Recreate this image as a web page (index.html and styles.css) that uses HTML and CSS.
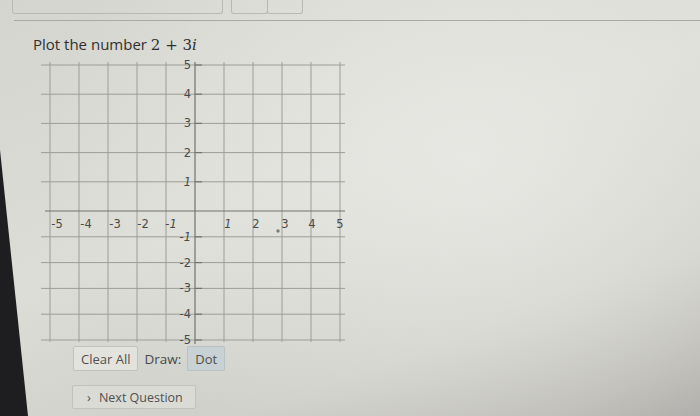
FILE: index.html
```html
<!DOCTYPE html>
<html>
<head>
<meta charset="utf-8">
<link rel="stylesheet" href="styles.css">
</head>
<body>
<div class="page">
  <div class="topbar">
    <div class="tab tab-wide"></div>
    <div class="tab tab-a"></div>
    <div class="tab tab-b"></div>
  </div>
  <div class="rule"></div>
  <h1 class="title">Plot the number <span class="math">2 + 3<i>i</i></span></h1>
  <svg class="graph" width="330" height="289" viewBox="0 0 330 289" xmlns="http://www.w3.org/2000/svg">
    <g class="grid" stroke="#9d9d98" stroke-width="1" fill="none">
      <line x1="20" y1="5" x2="20" y2="285"/>
      <line x1="49" y1="5" x2="49" y2="285"/>
      <line x1="78" y1="5" x2="78" y2="285"/>
      <line x1="107" y1="5" x2="107" y2="285"/>
      <line x1="136" y1="5" x2="136" y2="285"/>
      <line x1="194" y1="5" x2="194" y2="285"/>
      <line x1="223" y1="5" x2="223" y2="285"/>
      <line x1="252" y1="5" x2="252" y2="285"/>
      <line x1="281" y1="5" x2="281" y2="285"/>
      <line x1="310" y1="5" x2="310" y2="285"/>
      <line x1="11" y1="8" x2="315" y2="8"/>
      <line x1="11" y1="37.2" x2="315" y2="37.2"/>
      <line x1="11" y1="66.4" x2="315" y2="66.4"/>
      <line x1="11" y1="95.6" x2="315" y2="95.6"/>
      <line x1="11" y1="124.8" x2="315" y2="124.8"/>
      <line x1="11" y1="179.8" x2="315" y2="179.8"/>
      <line x1="11" y1="205.6" x2="315" y2="205.6"/>
      <line x1="11" y1="231.4" x2="315" y2="231.4"/>
      <line x1="11" y1="257.2" x2="315" y2="257.2"/>
      <line x1="11" y1="283" x2="315" y2="283"/>
    </g>
    <g class="axes" stroke="#73736f" stroke-width="1.2">
      <line x1="165" y1="5" x2="165" y2="287"/>
      <line x1="15" y1="154" x2="315" y2="154"/>
      <line x1="165" y1="8" x2="172" y2="8"/>
      <line x1="165" y1="37.2" x2="172" y2="37.2"/>
      <line x1="165" y1="66.4" x2="172" y2="66.4"/>
      <line x1="165" y1="95.6" x2="172" y2="95.6"/>
      <line x1="165" y1="124.8" x2="172" y2="124.8"/>
      <line x1="165" y1="179.8" x2="172" y2="179.8"/>
      <line x1="165" y1="205.6" x2="172" y2="205.6"/>
      <line x1="165" y1="231.4" x2="172" y2="231.4"/>
      <line x1="165" y1="257.2" x2="172" y2="257.2"/>
      <line x1="165" y1="283" x2="172" y2="283"/>
    </g>
    <g class="ylabels" font-size="11.5" fill="#4a4a47" text-anchor="end">
      <text x="161" y="12">5</text>
      <text x="161" y="41.2">4</text>
      <text x="161" y="70.4">3</text>
      <text x="161" y="99.6">2</text>
      <text x="161" y="128.8" font-style="italic">1</text>
      <text x="161" y="183.8" font-style="italic">-1</text>
      <text x="161" y="209.6">-2</text>
      <text x="161" y="235.4">-3</text>
      <text x="161" y="261.2">-4</text>
      <text x="161" y="287">-5</text>
    </g>
    <g class="xlabels" font-size="11.5" fill="#4a4a47" text-anchor="middle">
      <text x="27" y="171">-5</text>
      <text x="56" y="171">-4</text>
      <text x="85" y="171">-3</text>
      <text x="113" y="171">-2</text>
      <text x="141" y="171" font-style="italic">-1</text>
      <text x="198" y="171" font-style="italic">1</text>
      <text x="226" y="171">2</text>
      <text x="255" y="171">3</text>
      <text x="282" y="171">4</text>
      <text x="310" y="171">5</text>
    </g>
    <circle cx="248" cy="174" r="1.7" fill="#7b7b77"/>
  </svg>
  <div class="controls">
    <button class="btn">Clear All</button>
    <span class="label">Draw:</span>
    <button class="btn btn-active">Dot</button>
  </div>
  <button class="btn btn-next"><span class="chev">›</span>Next Question</button>
</div>
<div class="bezel"></div>
</body>
</html>
```

FILE: styles.css
```css
html, body {
  margin: 0;
  padding: 0;
  width: 700px;
  height: 416px;
  overflow: hidden;
}
body {
  position: relative;
  font-family: "Open Sans", "Noto Sans", sans-serif;
  color: #333331;
  background:
    radial-gradient(ellipse 420px 330px at 470px 160px, rgba(232,233,228,0.9), rgba(232,233,228,0) 100%),
    linear-gradient(160deg, #d4d5ce 0%, #dcddd7 45%, #cfcfca 75%, #aeaca8 100%);
}
.page {
  display: flex;
  flex-direction: column;
  align-items: flex-start;
  padding-left: 30px;
}
.topbar {
  display: flex;
  gap: 8px;
  margin-left: -18px;
}
.tab {
  height: 13px;
  border: 1px solid #b9b9b4;
  border-top: none;
  border-radius: 0 0 3px 3px;
}
.tab-wide { width: 209px; }
.tab-a { width: 35px; }
.tab-b { width: 34px; margin-left: -9px; }
.rule {
  width: 686px;
  margin-left: -16px;
  margin-top: 6px;
  border-top: 1px solid #a9a9a4;
}
.title {
  margin: 13px 0 0 3px;
  font-size: 15px;
  font-weight: normal;
  line-height: 20px;
  color: #303030;
}
.math {
  font-family: "DejaVu Serif", "Liberation Serif", serif;
  font-size: 15px;
}
.math i { font-style: italic; }
.graph {
  display: block;
  margin-top: 2px;
  font-family: "DejaVu Sans", sans-serif;
}
.controls {
  display: flex;
  align-items: center;
  gap: 6px;
  margin-left: 43px;
  margin-top: 0;
}
.btn {
  font-family: "Open Sans", "Noto Sans", sans-serif;
  font-size: 13px;
  color: #505050;
  background: #e3e3de;
  border: 1px solid #c2c2bd;
  border-radius: 2px;
  height: 25px;
  padding: 0 7px;
}
.label {
  font-size: 13.5px;
  color: #484848;
}
.btn-active {
  background: #c8d1d3;
  border-color: #b8c1c3;
  padding: 0 7px;
}
.btn-next {
  margin-left: 42px;
  margin-top: 14px;
  height: 24px;
  width: 124px;
  text-align: left;
  padding-left: 14px;
  font-size: 12.5px;
  background: #dbdbd6;
}
.chev {
  font-size: 13px;
  margin-right: 8px;
}
.bezel {
  position: absolute;
  left: 0;
  top: 0;
  width: 40px;
  height: 416px;
  background: #1e1e21;
  clip-path: polygon(0 150px, 28px 416px, 0 416px);
}
```
